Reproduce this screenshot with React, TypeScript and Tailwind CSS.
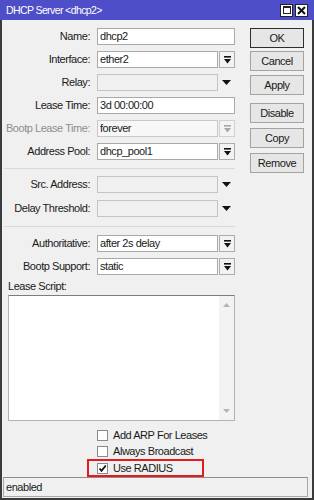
const font = "font-['Liberation_Sans',Arial,sans-serif]";

function DropIcon({ disabled }: { disabled?: boolean }) {
    const c = disabled ? "#a8a8a8" : "#111";
    return (
        <svg width="7" height="8" viewBox="0 0 7 8">
            <rect x="0" y="0" width="7" height="1.6" fill={c} />
            <polygon points="0,3 7,3 3.5,7.5" fill={c} />
        </svg>
    );
}

function Arrow() {
    return (
        <svg width="9" height="5" viewBox="0 0 9 5">
            <polygon points="0,0 9,0 4.5,5" fill="#111" />
        </svg>
    );
}

type Kind = "text" | "select" | "plain" | "disabledSelect";

function Row({
    label,
    value,
    kind = "text",
    dim,
    mt = "",
}: {
    label: string;
    value?: string;
    kind?: Kind;
    dim?: boolean;
    mt?: string;
}) {
    const grey = kind === "plain";
    return (
        <div className={`flex items-center h-[17px] ${mt}`}>
            <div
                className={`w-[88px] text-right ${dim ? "text-[#8d8d8d]" : "text-[#1a1a1a]"}`}
            >
                {label}
            </div>
            <div className="ml-[7px] flex h-full">
                <div
                    className={`h-full border flex items-center pl-[2px] ${
                        kind === "text" ? "w-[138px]" : "w-[121px]"
                    } ${
                        grey
                            ? "bg-[#f0f0f0] border-[#c4c4c4]"
                            : kind === "disabledSelect"
                              ? "bg-[#f7f7f7] border-[#c9c9c9]"
                              : "bg-white border-[#a9a9a9]"
                    }`}
                >
                    {value}
                </div>
                {(kind === "select" || kind === "disabledSelect") && (
                    <div
                        className={`ml-[1px] w-[16px] h-full border flex items-center justify-center ${
                            kind === "select"
                                ? "border-[#adadad] bg-[#f2f2f2]"
                                : "border-[#d0d0d0] bg-[#f4f4f4]"
                        }`}
                    >
                        <DropIcon disabled={kind === "disabledSelect"} />
                    </div>
                )}
                {kind === "plain" && (
                    <div className="w-[17px] flex items-center justify-center">
                        <Arrow />
                    </div>
                )}
            </div>
        </div>
    );
}

function Btn({ text, def, mt }: { text: string; def?: boolean; mt: string }) {
    return (
        <div
            className={`h-[20px] w-[54px] flex items-center justify-center bg-[#e6e6e6] border ${mt} ${
                def ? "border-[#2e2e2e]" : "border-[#a3a3a3]"
            }`}
        >
            {text}
        </div>
    );
}

function Check({ label, checked }: { label: string; checked?: boolean }) {
    return (
        <div className="flex items-center gap-[5px]">
            <div className="w-[11px] h-[11px] border border-[#8a8a8a] bg-white flex items-center justify-center">
                {checked && (
                    <svg width="9" height="9" viewBox="0 0 9 9">
                        <path d="M1.5 4.5 L3.5 6.8 L7.8 1.5" stroke="#111" strokeWidth="1.8" fill="none" />
                    </svg>
                )}
            </div>
            <span>{label}</span>
        </div>
    );
}

export default function App() {
    return (
        <div
            className={`w-[314px] h-[500px] flex flex-col bg-[#f0f0f0] border-x-2 border-b-2 border-[#3b3b3b] text-[11px] tracking-[-0.45px] text-[#1a1a1a] leading-none ${font}`}
        >
            {/* title bar */}
            <div className="h-[20px] -mx-[2px] bg-[#4e4ec8] flex items-center pl-[6px] pr-[6px] shrink-0">
                <span className="text-white text-[10.5px] tracking-[-0.6px] pt-[1px]">
                    DHCP Server &lt;dhcp2&gt;
                </span>
                <div className="ml-auto flex gap-[2px]">
                    <div className="w-[13px] h-[13px] bg-white border border-[#222] flex items-center justify-center">
                        <div className="w-[8px] h-[8px] border border-[#222] border-t-2" />
                    </div>
                    <div className="w-[13px] h-[13px] bg-white border border-[#222] flex items-center justify-center">
                        <svg width="9" height="9" viewBox="0 0 9 9">
                            <path d="M1 1 L8 8 M8 1 L1 8" stroke="#111" strokeWidth="2" />
                        </svg>
                    </div>
                </div>
            </div>

            <div className="flex flex-1">
                {/* form column */}
                <div className="w-[233px] flex flex-col pt-[8px]">
                    <div className="flex flex-col gap-[6px]">
                        <Row label="Name:" value="dhcp2" />
                        <Row label="Interface:" value="ether2" kind="select" />
                        <Row label="Relay:" kind="plain" />
                        <Row label="Lease Time:" value="3d 00:00:00" />
                        <Row label="Bootp Lease Time:" value="forever" kind="disabledSelect" dim />
                        <Row label="Address Pool:" value="dhcp_pool1" kind="select" />
                    </div>
                    <div className="h-px bg-[#d9d9d9] mt-[8px] mb-[7px] ml-[2px]" />
                    <div className="flex flex-col gap-[7px]">
                        <Row label="Src. Address:" kind="plain" />
                        <Row label="Delay Threshold:" kind="plain" />
                    </div>
                    <div className="h-px bg-[#d9d9d9] mt-[9px] mb-[8px] ml-[2px]" />
                    <div className="flex flex-col gap-[6px]">
                        <Row label="Authoritative:" value="after 2s delay" kind="select" />
                        <Row label="Bootp Support:" value="static" kind="select" />
                    </div>
                    <div className="ml-[6px] mt-[6px] h-[13px]">Lease Script:</div>
                    <div className="ml-[6px] mt-[1px] h-[126px] flex bg-white border border-[#b3b3b3] border-t-[#7d7d7d]">
                        <div className="flex-1" />
                        <div className="w-[15px] bg-[#f3f3f3] flex flex-col items-center justify-between py-[7px]">
                            <svg width="7" height="4" viewBox="0 0 7 4">
                                <polygon points="0,4 7,4 3.5,0" fill="#b5b5b5" />
                            </svg>
                            <svg width="7" height="4" viewBox="0 0 7 4">
                                <polygon points="0,0 7,0 3.5,4" fill="#b5b5b5" />
                            </svg>
                        </div>
                    </div>
                    <div className="flex flex-col mt-[6px]">
                        <div className="h-[16px] flex items-center pl-[95px]">
                            <Check label="Add ARP For Leases" />
                        </div>
                        <div className="h-[16px] flex items-center pl-[95px]">
                            <Check label="Always Broadcast" />
                        </div>
                        <div className="h-[18px] w-[117px] ml-[85px] border-2 border-[#e41b1b] flex items-center pl-[8px]">
                            <Check label="Use RADIUS" checked />
                        </div>
                    </div>
                </div>

                {/* buttons */}
                <div className="ml-[15px] flex flex-col pt-[8px]">
                    <Btn text="OK" def mt="" />
                    <Btn text="Cancel" mt="mt-[3px]" />
                    <Btn text="Apply" mt="mt-[4px]" />
                    <Btn text="Disable" mt="mt-[8px]" />
                    <Btn text="Copy" mt="mt-[5px]" />
                    <Btn text="Remove" mt="mt-[5px]" />
                </div>
            </div>

            {/* status bar */}
            <div className="h-[20px] ml-[1px] mr-[4px] mb-[1px] border border-[#a8a8a8] border-t-[#8f8f8f] flex items-center pl-[2px] shrink-0">
                enabled
            </div>
        </div>
    );
}
